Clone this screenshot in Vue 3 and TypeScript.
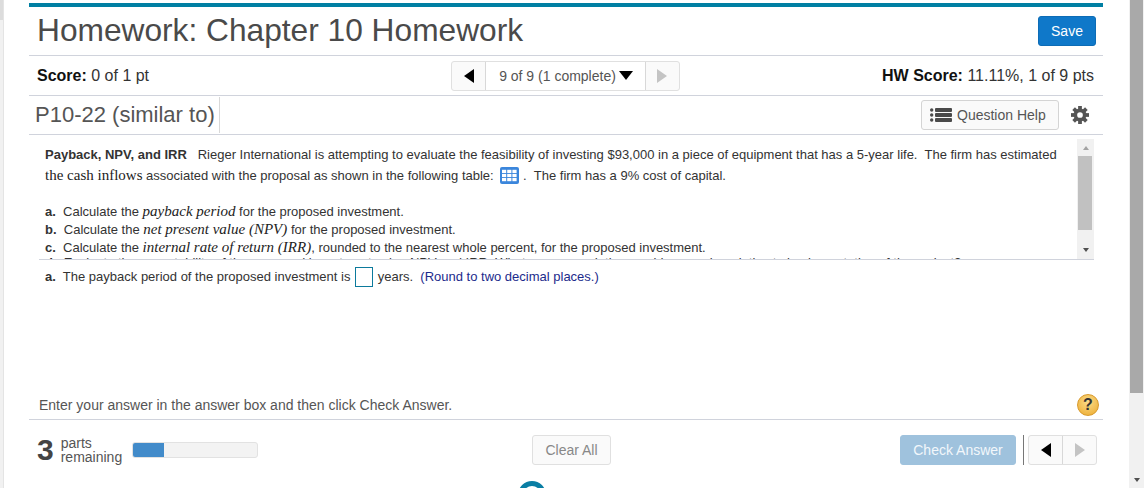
<template>
  <div class="page">
    <div class="gutter"></div>
    <main class="main">
      <header class="title-row">
        <h1>Homework: Chapter 10 Homework</h1>
        <button class="save">Save</button>
      </header>

      <section class="score-row">
        <div class="score"><b>Score:</b> 0 of 1 pt</div>
        <div class="pager">
          <span class="pager-btn"><i class="tri left"></i></span>
          <span class="pager-label">9 of 9 (1 complete)<i class="tri down"></i></span>
          <span class="pager-btn"><i class="tri right off"></i></span>
        </div>
        <div class="hw-score"><b>HW Score:</b> 11.11%, 1 of 9 pts</div>
      </section>

      <section class="question-row">
        <h2>P10-22 (similar to)</h2>
        <button class="help">
          <svg width="22" height="14" viewBox="0 0 22 14" fill="#4a4a4a">
            <circle cx="1.7" cy="2" r="1.7" />
            <circle cx="1.7" cy="7" r="1.7" />
            <circle cx="1.7" cy="12" r="1.7" />
            <rect x="5" y="0" width="17" height="4" rx="1" />
            <rect x="5" y="5" width="17" height="4" rx="1" />
            <rect x="5" y="10" width="17" height="4" rx="1" />
          </svg>
          Question Help
        </button>
        <svg class="gear" width="18" height="18" viewBox="0 0 24 24">
          <rect
            v-for="a in gearTeeth"
            :key="a"
            x="9.500"
            y="0"
            width="5"
            height="6"
            fill="#555"
            :transform="`rotate(${a} 12 12)`"
          />
          <circle cx="12" cy="12" r="6.2" fill="none" stroke="#555" stroke-width="4.800" />
        </svg>
      </section>

      <section class="prompt-wrap">
        <div class="prompt">
          <p class="intro">
            <b>Payback, NPV, and IRR</b>&nbsp;&nbsp; Rieger International is attempting to evaluate the feasibility of
            investing $93,000 in a piece of equipment that has a 5-year life.&nbsp; The firm has estimated
            <span class="serif">the cash inflows</span> associated with the proposal as shown in the following table:
            <svg class="table-icon" width="19" height="17" viewBox="0 0 19 17">
              <rect x="0" y="0" width="19" height="17" rx="2" fill="#3b86dc" />
              <rect v-for="c in tableCells" :key="c.k" :x="c.x" :y="c.y" width="4.200" height="3.200" fill="#fff" />
            </svg>
            .&nbsp;&nbsp;The firm has a 9% cost of capital.
          </p>
          <ul class="parts">
            <li v-for="part in parts" :key="part.label">
              <b>{{ part.label }}</b>&nbsp; {{ part.before }}<em>{{ part.term }}</em>{{ part.after }}
            </li>
          </ul>
        </div>
        <div class="inner-scroll">
          <i class="tri sb-up"></i>
          <div class="inner-track"><div class="inner-thumb"></div></div>
          <i class="tri sb-down"></i>
        </div>
      </section>

      <section class="answer">
        <b>a.</b>&nbsp; The payback period of the proposed investment is
        <span class="answer-box"></span>
        years.&nbsp; <span class="hint">(Round to two decimal places.)</span>
      </section>

      <section class="instruction">
        <span>Enter your answer in the answer box and then click Check Answer.</span>
        <span class="qmark">?</span>
      </section>

      <footer class="footer">
        <span class="big-num">3</span>
        <span class="parts-label">parts<br />remaining</span>
        <div class="progress"><div class="progress-fill" :style="{ width: progress + '%' }"></div></div>
        <button class="clear">Clear All</button>
        <button class="check">Check Answer</button>
        <span class="divider"></span>
        <div class="pager small">
          <span class="pager-btn"><i class="tri left"></i></span>
          <span class="pager-btn"><i class="tri right off"></i></span>
        </div>
      </footer>
      <div class="peek"></div>
    </main>
    <aside class="page-scroll">
      <div class="page-thumb"></div>
      <i class="tri sb-down"></i>
    </aside>
  </div>
</template>

<script setup lang="ts">
const parts = [
  { label: 'a.', before: 'Calculate the ', term: 'payback period', after: ' for the proposed investment.' },
  { label: 'b.', before: 'Calculate the ', term: 'net present value (NPV)', after: ' for the proposed investment.' },
  {
    label: 'c.',
    before: 'Calculate the ',
    term: 'internal rate of return (IRR)',
    after: ', rounded to the nearest whole percent, for the proposed investment.'
  },
  {
    label: 'd.',
    before: 'Evaluate the acceptability of the proposed investment using NPV and IRR.  What recommendation would you make relative to implementation of the project?',
    term: '',
    after: ''
  }
]

const progress = 25
const gearTeeth = [0, 45, 90, 135, 180, 225, 270, 315]

const tableCells: { k: string; x: number; y: number }[] = []
for (let r = 0; r < 3; r++) {
  for (let c = 0; c < 3; c++) {
    tableCells.push({ k: `${r}-${c}`, x: 2 + c * 5.2, y: 2.800 + r * 4.100 })
  }
}
</script>

<style>
html,
body {
  margin: 0;
  background: #fff;
  overflow: hidden;
}
</style>

<style scoped>
.page {
  display: flex;
  width: 1144px;
  height: 488px;
  overflow: hidden;
  font-family: "Liberation Sans", Arial, sans-serif;
  color: #444;
  background: #fff;
}
.gutter {
  width: 3px;
  flex: none;
  background: linear-gradient(#dcdcdc 20px, #f1f1f1 20px);
  border-right: 1px solid #e4e4e4;
}
.main {
  position: relative;
  width: 1074px;
  flex: none;
  margin-left: 25px;
  padding-top: 3px;
  box-sizing: border-box;
}
.title-row {
  display: flex;
  align-items: center;
  justify-content: space-between;
  height: 53px;
  box-sizing: border-box;
  border-top: 4px solid #007fa3;
  border-bottom: 1px solid #d0d3dc;
  padding: 0 7px 0 8px;
}
h1 {
  margin: -2px 0 0;
  font-size: 31.700px;
  font-weight: 400;
  color: #4a4a4a;
}
button {
  font-family: inherit;
  box-sizing: border-box;
}
.save {
  width: 58px;
  height: 30px;
  background: #0f78c9;
  border: 1px solid #0d6cb6;
  border-radius: 3px;
  color: #fff;
  font-size: 14px;
}
.score-row {
  display: grid;
  grid-template-columns: 1fr auto 1fr;
  align-items: center;
  height: 40px;
  box-sizing: border-box;
  border-bottom: 1px solid #d0d3dc;
  padding: 0 9px 0 8px;
  font-size: 16px;
  color: #333;
}
.score b,
.hw-score b {
  color: #111;
}
.hw-score {
  text-align: right;
}
.pager {
  display: flex;
  height: 30px;
  box-sizing: border-box;
  border: 1px solid #e0e0e0;
  border-radius: 3px;
  background: #fafafa;
}
.pager-btn {
  width: 33px;
  display: flex;
  align-items: center;
  justify-content: center;
}
.pager-label {
  display: flex;
  align-items: center;
  padding: 0 12px 0 13px;
  border-left: 1px solid #d8d8d8;
  border-right: 1px solid #d8d8d8;
  font-size: 14px;
  color: #555;
  background: #fff;
}
.tri {
  display: block;
  width: 0;
  height: 0;
  border-style: solid;
  border-color: transparent;
}
.tri.left {
  border-width: 7px 10px 7px 0;
  border-right-color: #000;
}
.tri.right {
  border-width: 7px 0 7px 10px;
  border-left-color: #000;
}
.tri.right.off {
  border-left-color: #c4c4c4;
}
.tri.down {
  margin-left: 3px;
  border-width: 9px 7px 0;
  border-top-color: #000;
}
.question-row {
  display: flex;
  align-items: center;
  height: 39px;
  box-sizing: border-box;
  border-bottom: 1px solid #d0d3dc;
  padding-right: 14px;
}
h2 {
  margin: 0 auto 0 0;
  height: 36px;
  line-height: 36px;
  padding: 0 4px 0 6px;
  border-right: 1px solid #d8d8d8;
  font-size: 22px;
  font-weight: 400;
  color: #555;
}
.help {
  display: flex;
  align-items: center;
  gap: 5px;
  width: 138px;
  height: 30px;
  padding: 0 0 0 8px;
  background: #fafafa;
  border: 1px solid #d4d4d4;
  border-radius: 3px;
  font-size: 14px;
  color: #555;
}
.gear {
  margin-left: 12px;
}
.prompt-wrap {
  display: flex;
  height: 124px;
  margin: 0 9px 0 10px;
  overflow: hidden;
  border-bottom: 1px solid #d0d3dc;
  font-size: 13px;
  color: #333;
}
.prompt {
  flex: 1;
  min-width: 0;
  padding: 9px 0 0 6px;
  box-sizing: border-box;
}
.intro {
  height: 42px;
  margin: 0 0 17px;
  line-height: 21px;
}
.serif {
  font-family: "Liberation Serif", "Times New Roman", serif;
  font-size: 15px;
  line-height: 1;
  color: #222;
}
.table-icon {
  vertical-align: -4px;
  margin: 0 0 0 3px;
}
.parts {
  list-style: none;
  margin: 0;
  padding: 0;
}
.parts li {
  line-height: 18px;
  height: 18px;
  white-space: nowrap;
}
.parts li:last-child {
  margin-top: -3px;
}
.parts em {
  font-family: "Liberation Serif", "Times New Roman", serif;
  font-size: 15px;
  line-height: 1;
  color: #222;
}
.inner-scroll {
  width: 17px;
  height: 120px;
  margin-top: 4px;
  flex: none;
  background: #f1f1f1;
  display: flex;
  flex-direction: column;
  align-items: center;
}
.inner-track {
  flex: 1;
  width: 100%;
  padding: 0 2px 0 1px;
  box-sizing: border-box;
}
.inner-thumb {
  height: 74px;
  background: #c1c1c1;
}
.sb-up {
  margin: 7px 0 6px;
  border-width: 0 3.500px 4px;
  border-bottom-color: #a3a3a3;
}
.sb-down {
  margin: 6px 0 7px;
  border-width: 4px 3.500px 0;
  border-top-color: #505050;
}
.answer {
  height: 134px;
  box-sizing: border-box;
  padding: 7px 0 0 16px;
  font-size: 13px;
  line-height: 20px;
  color: #333;
}
.answer-box {
  display: inline-block;
  width: 18px;
  height: 20px;
  box-sizing: border-box;
  margin: 0 1px;
  border: 1px solid #0c7a9c;
  vertical-align: -6px;
}
.hint {
  color: #1c2b8c;
}
.instruction {
  display: flex;
  align-items: center;
  justify-content: space-between;
  height: 26px;
  box-sizing: border-box;
  border-bottom: 1px solid #d0d3dc;
  padding: 0 4px 4px 10px;
  font-size: 14px;
  color: #555;
}
.qmark {
  width: 22px;
  height: 22px;
  border-radius: 50%;
  background: radial-gradient(circle at 50% 35%, #fbdc8a, #eba92c);
  border: 1px solid #d89a2c;
  box-sizing: border-box;
  color: #333;
  font-weight: 700;
  font-size: 16px;
  line-height: 20px;
  text-align: center;
}
.footer {
  display: flex;
  align-items: center;
  height: 62px;
  padding: 0 6px 2px 8px;
  box-sizing: border-box;
}
.big-num {
  font-size: 30px;
  font-weight: 700;
  color: #444;
  margin-right: 7px;
}
.parts-label {
  font-size: 14px;
  line-height: 14px;
  color: #555;
}
.progress {
  width: 126px;
  height: 16px;
  box-sizing: border-box;
  margin-left: 10px;
  margin-bottom: 1px;
  background: #f3f3f3;
  border: 1px solid #e2e2e2;
  border-radius: 3px;
  overflow: hidden;
}
.progress-fill {
  height: 100%;
  background: #428bca;
}
.clear {
  width: 79px;
  height: 30px;
  margin-left: auto;
  margin-right: 289px;
  background: #fafafa;
  border: 1px solid #e0e0e0;
  border-radius: 3px;
  color: #888;
  font-size: 14px;
}
.check {
  width: 116px;
  height: 30px;
  background: #9fc2dd;
  border: 1px solid #9fc2dd;
  border-radius: 3px;
  color: #f2f7fb;
  font-size: 14px;
}
.divider {
  width: 1px;
  height: 30px;
  margin: 0 4px 0 7px;
  background: #777;
}
.pager.small .pager-btn + .pager-btn {
  border-left: 1px solid #d8d8d8;
}
.peek {
  position: absolute;
  left: 489px;
  top: 481px;
  width: 28px;
  height: 28px;
  box-sizing: border-box;
  border: 5px solid #0a7ea4;
  border-radius: 50%;
}
.page-scroll {
  position: absolute;
  right: 0;
  top: 0;
  width: 15px;
  height: 488px;
  background: #f1f1f1;
  display: flex;
  flex-direction: column;
  align-items: center;
  justify-content: space-between;
}
.page-thumb {
  width: 13px;
  height: 393px;
  background: #a9a9a9;
}
.page-scroll .sb-down {
  margin: 0 0 6px;
}
</style>
